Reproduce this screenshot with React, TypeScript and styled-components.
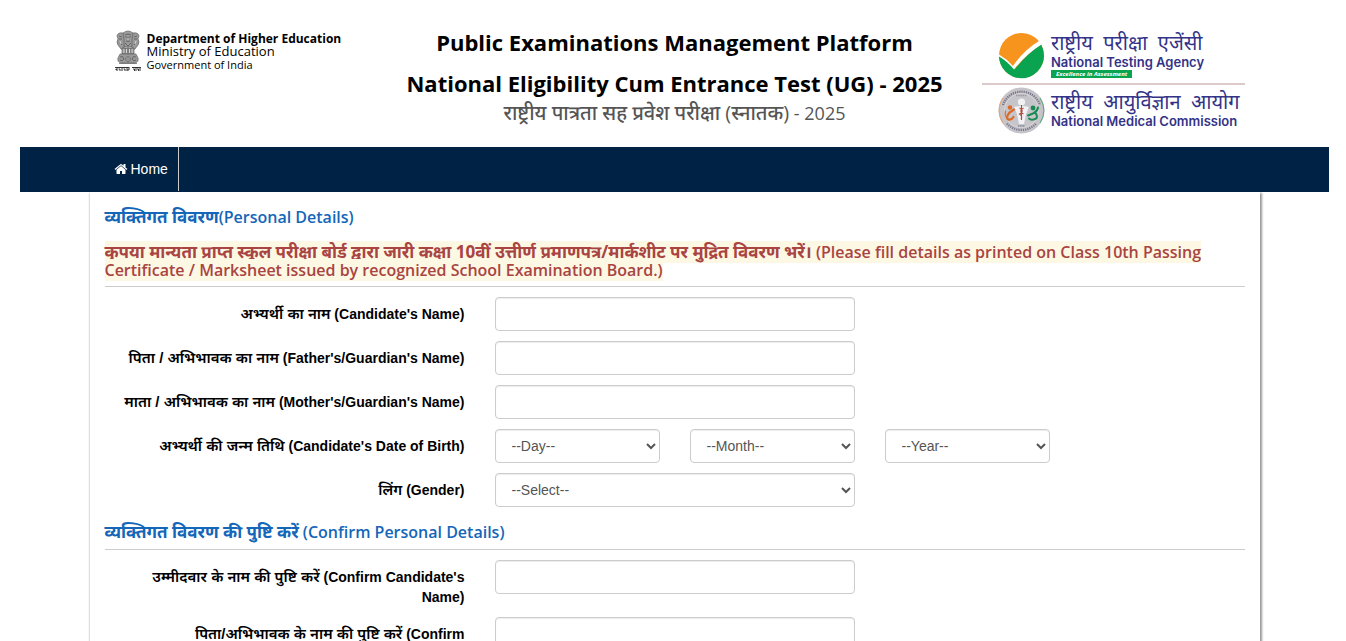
import React from "react";
import styled, { createGlobalStyle } from "styled-components";

const GlobalStyle = createGlobalStyle`
  *, *::before, *::after { box-sizing: border-box; }
  html { background: #fff; }
  body {
    margin: 0;
    background: #fff;
    color: #000;
    font: 14px/20px "Liberation Sans", Arial, "Noto Sans Devanagari", "Noto Sans", sans-serif;
  }
  h1, h2, h3, p { margin: 0; }
`;

const openSans = `"Open Sans", "Noto Sans Devanagari", "Noto Sans", sans-serif`;

const Page = styled.div`
  padding: 0 17px 0 20px;
`;

const Container = styled.div`
  width: 100%;
  max-width: 1170px;
  margin: 0 auto;
`;

const Header = styled(Container).attrs({ as: "header" })`
  display: grid;
  grid-template-columns: 1fr 2fr 1fr;
  padding-bottom: 10px;
`;

const Department = styled.div`
  display: flex;
  align-items: flex-start;
  gap: 6px;
  padding: 30px 0 0 25px;
`;

const DepartmentText = styled.div`
  font-family: ${openSans};
  white-space: nowrap;
  padding-top: 2px;
`;

const DepartmentLine = styled.p<{ $size: number; $bold?: boolean }>`
  font-size: ${(p) => p.$size}px;
  line-height: 13px;
  font-weight: ${(p) => (p.$bold ? 700 : 400)};
`;

const Titles = styled.div`
  font-family: ${openSans};
  text-align: center;
  white-space: nowrap;
  padding-top: 27px;
`;

const Title = styled.h1`
  font-size: 22px;
  line-height: 30px;
  font-weight: 700;
  margin-bottom: 11px;
  & + & { margin-bottom: 0; }
`;

const Subtitle = styled.p`
  font-size: 18px;
  line-height: 30px;
  font-weight: 500;
  color: #555;
`;

const Hindi = styled.span<{ $size: number; $weight: number }>`
  font-size: ${(p) => p.$size}px;
  font-weight: ${(p) => p.$weight};
  line-height: 1;
`;

const Agencies = styled.div`
  padding: 29px 15px 0 15px;
`;

const Agency = styled.div`
  display: flex;
  align-items: center;
  gap: 6px;
  height: 54px;
  padding: 0 0 2px 16px;
  color: #333388;
  white-space: nowrap;
  & + & { border-top: 2px solid #dcc9cb; }
`;

const AgencyText = styled.div`
  display: flex;
  flex-direction: column;
  align-items: flex-start;
`;

const AgencyHindi = styled.p`
  font: 400 20px/22px ${openSans};
  word-spacing: normal;
`;

const AgencyName = styled.p`
  font: 600 13px/16px Inter, sans-serif;
`;

const Motto = styled.p`
  background: #0aa34f;
  color: #fff;
  font: italic 700 6px/8px "Open Sans", sans-serif;
  padding: 0 5px;
`;

const NavBar = styled.nav`
  background: #002244;
`;

const NavInner = styled(Container)`
  display: flex;
  padding: 0 14px 1px;
`;

const NavLink = styled.a`
  display: flex;
  align-items: center;
  gap: 3px;
  padding: 12px 10px;
  border-right: 1px solid #ccc;
  color: #fff;
  text-decoration: none;
`;

const Panel = styled(Container).attrs({ as: "main" })`
  padding: 15px 15px 40px;
  box-shadow: 1px 2px 2px 1px #999;
  clip-path: inset(0 -8px -8px -8px);
`;

const SectionTitle = styled.h2`
  font: 600 16px/20px ${openSans};
  color: #1466b8;
`;

const Divider = styled.div`
  border-bottom: 1px solid #ccc;
  padding-bottom: 7px;
  margin-bottom: 10px;
`;

const Section = styled.section`
  & + & { padding-top: 5px; }
`;

const Notice = styled.h3`
  margin-top: 16px;
  font: 600 16px/18px ${openSans};
  color: #a94442;
`;

const Highlight = styled.span`
  background: #fcf8e3;
`;

const Row = styled.div`
  display: grid;
  grid-template-columns: repeat(12, 1fr);
  margin: 0 -15px 10px;
`;

const Label = styled.label`
  grid-column: span 4;
  padding: 7px 15px 0 20px;
  text-align: right;
  font-weight: 700;
`;

const Cell = styled.div<{ $span: number }>`
  grid-column: span ${(p) => p.$span};
  padding: 0 15px;
`;

const Input = styled.input`
  display: block;
  width: 100%;
  height: 34px;
  padding: 6px 12px;
  border: 1px solid #ccc;
  border-radius: 4px;
  background: #fff;
  color: #555;
  font: inherit;
  box-shadow: inset 0 1px 1px rgba(0, 0, 0, 0.075);
`;

const Select = styled(Input).attrs({ as: "select" })``;

const HomeIcon = () => (
  <svg width="14" height="14" viewBox="0 0 1792 1792" fill="currentColor" aria-hidden="true">
    <path d="M1472 992v480q0 26-19 45t-45 19h-384v-384h-256v384h-384q-26 0-45-19t-19-45v-480q0-1 .5-3t.5-3l575-474 575 474q1 2 1 6zm223-69l-62 74q-8 9-21 11h-3q-13 0-21-7l-692-577-692 577q-12 8-24 7-13-2-21-11l-62-74q-8-10-7-23.500t11-21.500l719-599q32-26 76-26t76 26l244 204v-195q0-14 9-23t23-9h192q14 0 23 9t9 23v408l219 182q10 8 11 21.500t-7 23.500z" />
  </svg>
);

const Emblem = () => (
  <svg width="26" height="43" viewBox="0 0 26 43" role="img" aria-label="State Emblem of India">
    <g fill="#9a9a9a" stroke="#555" strokeWidth="0.6">
      <path d="M8 3Q13-1 18 3Q20 6 18 10L17 17H9L8 10Q6 6 8 3Z" />
      <path d="M8 3Q3 2 2 6L3 9Q1 12 3 15L6 19L9 20L9 10Z" />
      <path d="M18 3Q23 2 24 6L23 9Q25 12 23 15L20 19L17 20L17 10Z" />
      <path d="M7 18H19V24H7Z" />
      <path d="M5 24H21L23 28Q24 32 20 33H6Q2 32 3 28Z" />
    </g>
    <g fill="none" stroke="#444" strokeWidth="0.6">
      <path d="M10 5Q13 3 16 5M10 7L12 7M14 7L16 7M13 7V10M11 11Q13 12 15 11M10 13L13 16L16 13M4 6L7 7M4 9L7 9M5 12L7 15M22 6L19 7M22 9L19 9M21 12L19 15M10 18V23M13 17V23M16 18V23" />
      <circle cx="13" cy="29" r="2.3" fill="#ddd" />
      <path d="M10.7 29H15.3M13 26.700V31.300M5 27Q8 25 9 29Q7 32 5 30M21 27Q18 25 17 29Q19 32 21 30M4 33.500H22" />
    </g>
    <g stroke="#e8e8e8" strokeWidth="0.8">
      <path d="M9 19V23M11.500 19V23M14.500 19V23M17 19V23M5 11L6 14M21 11L20 14M12 9H14" />
    </g>
    <path
      d="M0 37.500H14.500M17 37.500H26M2 38V41M.5 39.500H2M3.500 39H5V41M7 38V41M8.500 39H10V41M12 38V41M12 40H14V38M18 39H19.500V41M21 38V41M22 39H23.500V41M25 38V41"
      fill="none"
      stroke="#333"
      strokeWidth="1"
    />
  </svg>
);

const TestingAgencyLogo = () => (
  <svg width="47" height="47" viewBox="0 0 47 47" role="img" aria-label="National Testing Agency">
    <circle cx="23.500" cy="23.500" r="22.500" fill="#f7941d" />
    <path d="M1 23.500A22.500 22.500 0 0 0 46 24Q46 18 43 12Q28 23 17 37Q10 28 1 23.500Z" fill="#0aa34f" />
    <path d="M1 22.500Q9 27 15 34Q26 18 41 9L43.500 12.500Q28 22 16 37.500Q9 29 1 24.500Z" fill="#fff" />
  </svg>
);

const MedicalCommissionLogo = () => (
  <svg width="47" height="47" viewBox="0 0 47 47" role="img" aria-label="National Medical Commission">
    <circle cx="23.500" cy="23.500" r="23" fill="#c6c4c8" />
    <path d="M5 11A22 22 0 0 0 5 36" fill="none" stroke="#e9a06a" strokeWidth="1" />
    <path d="M42 11A22 22 0 0 1 42 36" fill="none" stroke="#4fa878" strokeWidth="1" />
    <path
      d="M5 18A19.500 19.500 0 0 1 42 18M9 36.500A19.500 19.500 0 0 0 38 36.500"
      fill="none"
      stroke="#77758c"
      strokeWidth="2.300"
      strokeDasharray="1.200 1"
    />
    <circle cx="23.500" cy="23.500" r="17" fill="#c6c5c9" stroke="#dcdbde" strokeWidth="0.700" />
    <path d="M18 8.500H29" stroke="#9a98a8" strokeWidth="1.600" strokeDasharray="1.500 0.700" />
    <path d="M20 39H27" stroke="#88869a" strokeWidth="1.600" strokeDasharray="1.500 0.700" />
    <circle cx="23.500" cy="15" r="3.600" fill="#f2f2f4" />
    <path d="M16 20Q23.500 18 31 20L28 27L26 37H21L19 27Z" fill="#f2f2f4" />
    <path d="M23.500 18V33M21.500 21Q27 24 21.500 27Q25 29 23 32M25.500 21Q20 24 25.500 27" fill="none" stroke="#b04b3e" strokeWidth="1.100" />
    <g fill="none" strokeLinecap="round">
      <circle cx="12" cy="20.500" r="2.200" fill="#dd6a26" />
      <path d="M16 22.500L11.500 25.500Q8 30 9.500 32Q13 34 15.500 30" stroke="#dd6a26" strokeWidth="2.200" />
      <path d="M7.500 24Q6.500 27 8 30" stroke="#dd6a26" strokeWidth="1.200" />
      <circle cx="35" cy="21" r="2.400" fill="#198b54" />
      <path d="M30 28.500L35 26.500Q39.500 24 40 20.500M37 25.500Q41 30 37 32Q33 33.500 31 31.500" stroke="#198b54" strokeWidth="2" />
    </g>
  </svg>
);

const TextRow = ({ id, hindi, english }: { id: string; hindi: string; english: string }) => (
  <Row>
    <Label htmlFor={id}>
      <Hindi $size={15} $weight={600}>{hindi}</Hindi> {english}
    </Label>
    <Cell $span={4}>
      <Input id={id} type="text" />
    </Cell>
  </Row>
);

export default function App() {
  return (
    <>
      <GlobalStyle />
      <Page>
        <Header>
          <Department>
            <Emblem />
            <DepartmentText>
              <DepartmentLine $size={12} $bold>Department of Higher Education</DepartmentLine>
              <DepartmentLine $size={13}>Ministry of Education</DepartmentLine>
              <DepartmentLine $size={11}>Government of India</DepartmentLine>
            </DepartmentText>
          </Department>
          <Titles>
            <Title>Public Examinations Management Platform</Title>
            <Title>National Eligibility Cum Entrance Test (UG) - 2025</Title>
            <Subtitle>
              <Hindi $size={20} $weight={500}>राष्ट्रीय पात्रता सह प्रवेश परीक्षा (स्नातक)</Hindi> - 2025
            </Subtitle>
          </Titles>
          <Agencies>
            <Agency>
              <TestingAgencyLogo />
              <AgencyText>
                <AgencyHindi>राष्ट्रीय&nbsp; परीक्षा&nbsp; एजेंसी</AgencyHindi>
                <AgencyName>National Testing Agency</AgencyName>
                <Motto>Excellence in Assessment</Motto>
              </AgencyText>
            </Agency>
            <Agency>
              <MedicalCommissionLogo />
              <AgencyText>
                <AgencyHindi>राष्ट्रीय&nbsp; आयुर्विज्ञान&nbsp; आयोग</AgencyHindi>
                <AgencyName>National Medical Commission</AgencyName>
              </AgencyText>
            </Agency>
          </Agencies>
        </Header>
        <NavBar>
          <NavInner>
            <NavLink href="#home">
              <HomeIcon />
              Home
            </NavLink>
          </NavInner>
        </NavBar>
        <Panel>
          <form>
            <Section>
              <Divider>
                <SectionTitle>
                  <Hindi $size={17} $weight={700}>व्यक्तिगत विवरण</Hindi>(Personal Details)
                </SectionTitle>
                <Notice>
                  <Highlight>
                    <Hindi $size={17} $weight={700}>
                      कृपया मान्यता प्राप्त स्कूल परीक्षा बोर्ड द्वारा जारी कक्षा 10वीं उत्तीर्ण प्रमाणपत्र/मार्कशीट पर
                      मुद्रित विवरण भरें।
                    </Hindi>{" "}
                    (Please fill details as printed on Class 10th Passing Certificate / Marksheet issued by recognized
                    School Examination Board.)
                  </Highlight>
                </Notice>
              </Divider>
              <TextRow id="name" hindi="अभ्यर्थी का नाम" english="(Candidate's Name)" />
              <TextRow id="father" hindi="पिता / अभिभावक का नाम" english="(Father's/Guardian's Name)" />
              <TextRow id="mother" hindi="माता / अभिभावक का नाम" english="(Mother's/Guardian's Name)" />
              <Row>
                <Label htmlFor="day">
                  <Hindi $size={15} $weight={600}>अभ्यर्थी की जन्म तिथि</Hindi> (Candidate's Date of Birth)
                </Label>
                <Cell $span={2}>
                  <Select id="day"><option>--Day--</option></Select>
                </Cell>
                <Cell $span={2}>
                  <Select aria-label="Month"><option>--Month--</option></Select>
                </Cell>
                <Cell $span={2}>
                  <Select aria-label="Year"><option>--Year--</option></Select>
                </Cell>
              </Row>
              <Row>
                <Label htmlFor="gender">
                  <Hindi $size={15} $weight={600}>लिंग</Hindi> (Gender)
                </Label>
                <Cell $span={4}>
                  <Select id="gender"><option>--Select--</option></Select>
                </Cell>
              </Row>
            </Section>
            <Section>
              <Divider>
                <SectionTitle>
                  <Hindi $size={17} $weight={700}>व्यक्तिगत विवरण की पुष्टि करें</Hindi> (Confirm Personal Details)
                </SectionTitle>
              </Divider>
              <TextRow
                id="confirm-name"
                hindi="उम्मीदवार के नाम की पुष्टि करें"
                english="(Confirm Candidate's Name)"
              />
              <TextRow
                id="confirm-father"
                hindi="पिता/अभिभावक के नाम की पुष्टि करें"
                english="(Confirm Father's/Guardian's Name)"
              />
            </Section>
          </form>
        </Panel>
      </Page>
    </>
  );
}
